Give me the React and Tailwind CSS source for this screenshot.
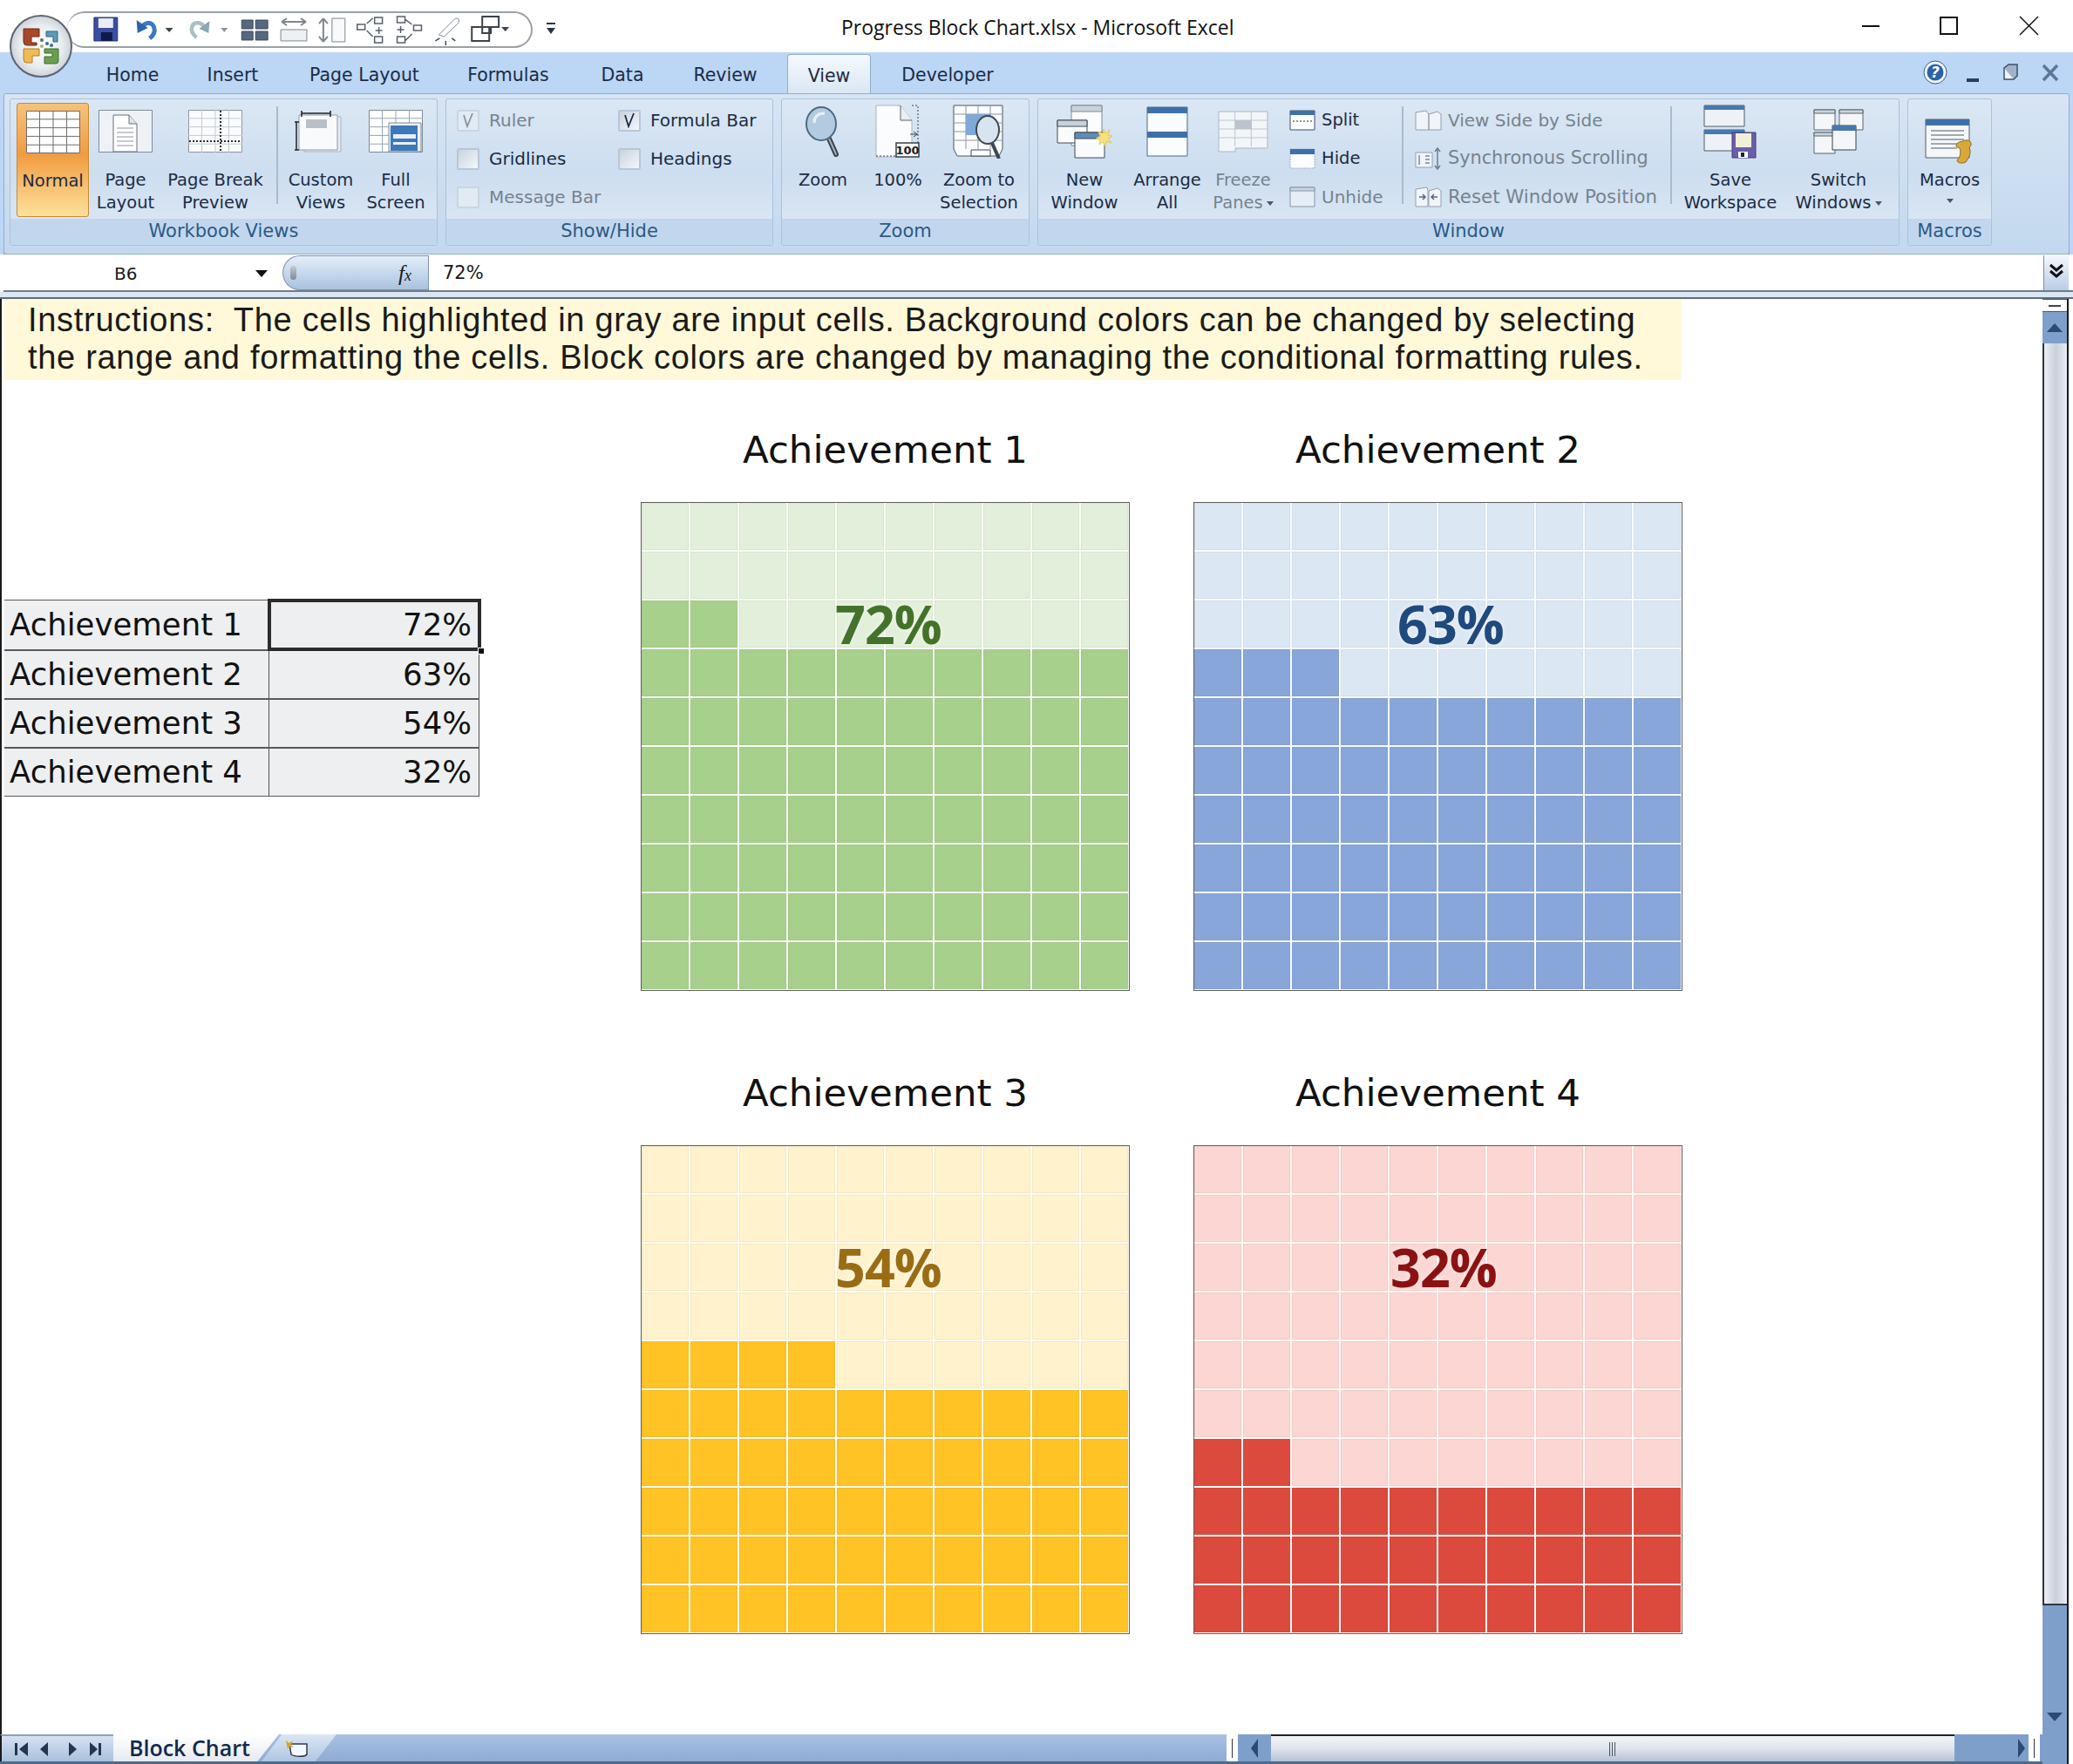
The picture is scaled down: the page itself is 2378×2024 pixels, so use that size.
import { Fragment } from 'react'

const charts = [
  [
    { title: 'Achievement 1', pct: 72, on: 'bg-[#a8d08d]', off: 'bg-[#e2efda]', line: 'bg-[#fafcf6]', text: 'text-[#44722a]', pos: 'left-[222px] top-[104px]' },
    { title: 'Achievement 2', pct: 63, on: 'bg-[#88a6da]', off: 'bg-[#dce7f4]', line: 'bg-[#f9fbfe]', text: 'text-[#1f4a7d]', pos: 'left-[233px] top-[104px]' },
  ],
  [
    { title: 'Achievement 3', pct: 54, on: 'bg-[#ffc326]', off: 'bg-[#fff2cc]', line: 'bg-[#fefcf3]', text: 'text-[#9a6c14]', pos: 'left-[222px] top-[104px]' },
    { title: 'Achievement 4', pct: 32, on: 'bg-[#dc4a3e]', off: 'bg-[#fcd6d2]', line: 'bg-[#fef8f7]', text: 'text-[#8c1212]', pos: 'left-[225px] top-[104px]' },
  ],
]

const rows = [
  ['Achievement 1', '72%'],
  ['Achievement 2', '63%'],
  ['Achievement 3', '54%'],
  ['Achievement 4', '32%'],
]

const tabs = [
  ['Home', 'w-[118px]'],
  ['Insert', 'w-[112px]'],
  ['Page Layout', 'w-[190px]'],
  ['Formulas', 'w-[140px]'],
  ['Data', 'w-[122px]'],
  ['Review', 'w-[114px]'],
]

function BlockChart({ chart }) {
  const full = Math.floor(chart.pct / 10)
  const rest = chart.pct % 10
  const cells = []
  for (let r = 0; r < 10; r++) {
    for (let c = 0; c < 10; c++) {
      const fromBottom = 9 - r
      const filled = fromBottom < full || (fromBottom === full && c < rest)
      cells.push(<div key={r + '-' + c} className={`h-[54px] w-[54px] shadow-[inset_0_0_0_1px_rgba(60,60,40,.05)] ${filled ? chart.on : chart.off}`} />)
    }
  }
  return (
    <div className="flex w-[561px] flex-col items-center">
      <div className="flex h-[60px] items-center pt-[2px] text-[43.500px] text-[#111]">{chart.title}</div>
      <div className={`relative mt-[30px] grid w-[561px] grid-cols-[repeat(10,54px)] gap-[2px] border-[1px] border-[#5f5f5a] pb-[1px] ${chart.line}`}>
        {cells}
        <span className={`absolute [font-family:'Open_Sans',sans-serif] text-[61px] font-bold leading-[70px] tracking-[-1px] [text-shadow:0_0_6px_rgba(255,255,255,.6)] ${chart.pos} ${chart.text}`}>
          {chart.pct}%
        </span>
      </div>
    </div>
  )
}

function OfficeButton() {
  return (
    <div className="absolute left-[11px] top-[17px] z-10 flex h-[72px] w-[72px] items-center justify-center rounded-full border-[2px] border-[#5b6570] bg-radial from-[#ffffff] via-[#e9edf0] to-[#a9b3bb]">
      <svg width="48" height="48" viewBox="0 0 48 48">
        <path d="M4 4h18v9H13v7h6v3H8a4 4 0 0 1-4-4z" fill="#a8482a" stroke="#6e2a10" />
        <path d="M30 7h13v12h-5v-6h-8z" fill="#5e9bb8" stroke="#2d6685" />
        <path d="M4 27h18v8h-8v8H8a4 4 0 0 1-4-4z" fill="#eebb58" stroke="#b57c18" />
        <path d="M28 27h16v14a3 3 0 0 1-3 3H28v-8h9v-4h-9z" fill="#6a9f52" stroke="#3b7126" />
        <circle cx="25" cy="17" r="2" fill="#5b6a72" />
        <circle cx="31" cy="21" r="2" fill="#3f6f8a" />
        <circle cx="25" cy="24" r="2" fill="#a9b089" />
        <circle cx="36" cy="23" r="2" fill="#3f6f8a" />
      </svg>
    </div>
  )
}

function Qat() {
  const s = '#7d8791'
  return (
    <div className="relative ml-[77px] mt-[13px] flex h-[42px] w-[534px] items-center rounded-r-[21px] rounded-l-[20px] border-[2px] border-[#9aa0a6] border-l-0 bg-white">
      <svg width="534" height="42" viewBox="77 13 534 42">
        <path d="M108 20h27v27h-27z" fill="#3a4f9e" stroke="#1f2f70" />
        <path d="M113 21h17v11h-17z" fill="#e8ecf5" />
        <path d="M116 37h13v10h-13z" fill="#101a4a" />
        <path d="M162 34c3-9 13-10 15-3 2 6-1 10-5 13" fill="none" stroke="#3c78c4" strokeWidth="5" />
        <path d="M157 23l1 15 12-6z" fill="#2f65ad" />
        <path d="M190 32h9l-4.500 5z" fill="#38424e" />
        <path d="M236 33c-3-8-13-9-15-3-2 6 1 10 5 13" fill="none" stroke="#a9bfc7" strokeWidth="4.500" />
        <path d="M241 24l-1 14-11-5z" fill="#8ea7b1" />
        <path d="M254 32h8l-4 5z" fill="#8a939c" />
        <path d="M278 23h13v10h-13zM294 23h14v10h-14zM278 36h13v10h-13zM294 36h14v10h-14z" fill="#55687d" stroke="#3a4a5c" />
        <path d="M323 34h30v13h-30z" fill="#eef1f4" stroke={s} />
        <path d="M324 25h28M324 25l6-4M324 25l6 4M352 25l-6-4M352 25l-6 4" fill="none" stroke={s} strokeWidth="2" />
        <path d="M382 21h15v27h-15z" fill="#f7f9fb" stroke={s} />
        <path d="M372 21v27M372 21l-5 6M372 21l5 6M372 48l-5-6M372 48l5-6" fill="none" stroke={s} strokeWidth="2" />
        <path d="M411 28h9v6h-9zM431 20h9v7h-9zM431 42h9v7h-9zM422 27l7-6M422 35l7 7M432 35h8M436 31v8" fill="none" stroke="#56606b" strokeWidth="1.500" />
        <path d="M476 29h9v6h-9zM457 19h9v7h-9zM457 42h9v7h-9zM466 22l8 6M466 47l8-8M457 34h8M461 30v8" fill="none" stroke="#56606b" strokeWidth="1.500" />
        <path d="M505 40l18-18c4-3 7 1 4 5l-16 15z" fill="#fff" stroke="#7f8992" />
        <path d="M501 47l5-3M513 47v5M524 47l-4-3" fill="none" stroke="#3c4650" strokeWidth="1.500" />
        <path d="M555 19h19v12h-9v7h-10zM543 31h20v16h-20z" fill="none" stroke="#3a434c" strokeWidth="2" />
        <path d="M577 31h9l-4.500 5z" fill="#38424e" />
      </svg>
    </div>
  )
}

function WinControls() {
  return (
    <svg width="232" height="26" viewBox="0 0 232 26" className="mb-[2px] ml-auto mr-[10px]">
      <path d="M0 14h20" stroke="#111" strokeWidth="2" />
      <path d="M90 4h19v19H90z" fill="none" stroke="#111" strokeWidth="2" />
      <path d="M181 3l21 21M202 3l-21 21" stroke="#111" strokeWidth="1.500" />
    </svg>
  )
}

function HelpIcons() {
  return (
    <svg width="160" height="34" viewBox="0 0 160 34" className="ml-auto mr-[12px]">
      <circle cx="14" cy="16" r="13" fill="#f4f8fd" stroke="#3a5f8d" />
      <circle cx="14" cy="16" r="9.500" fill="#2b62a8" />
      <text x="14" y="22" textAnchor="middle" fontSize="17" fontWeight="700" fontStyle="italic" fill="#fff">?</text>
      <path d="M50 23h14v4H50z" fill="#2c3e55" />
      <path d="M93 11h11v13H93z" fill="#eef3f9" stroke="#3f5169" strokeWidth="1.500" />
      <path d="M93 11l5-4h10v13l-4 4" fill="#9fb2c8" stroke="#3f5169" strokeWidth="1.500" />
      <path d="M138 8l16 17M154 8l-16 17" stroke="#5b7699" strokeWidth="3.500" />
    </svg>
  )
}

function Ico({ w = 62, h = 50, children }) {
  return <svg width={w} height={h} viewBox={`0 0 ${w} ${h}`}>{children}</svg>
}

function GridLines({ x, y, w, h, cols, rows, stroke = '#7e8790' }) {
  const d = []
  for (let i = 1; i < cols; i++) d.push(`M${x + (w * i) / cols} ${y}v${h}`)
  for (let i = 1; i < rows; i++) d.push(`M${x} ${y + (h * i) / rows}h${w}`)
  return <path d={d.join('')} fill="none" stroke={stroke} strokeWidth="1" />
}

const icons = {
  normal: (
    <Ico>
      <path d="M.5.5h61v48H.5z" fill="#fff" stroke="#6d6d6d" />
      <GridLines x={0} y={0} w={62} h={49} cols={4} rows={5} stroke="#6d6d6d" />
    </Ico>
  ),
  pageLayout: (
    <Ico>
      <path d="M.5.5h61v48H.5z" fill="#eef2f7" stroke="#7e8c9b" />
      <path d="M17 6h18l9 10v32H17z" fill="#fff" stroke="#68717b" />
      <path d="M35 6v10h9" fill="#dfe5ec" stroke="#68717b" />
      <path d="M21 21h19M21 26h19M21 31h19M21 36h19M21 41h19" stroke="#8d969f" />
    </Ico>
  ),
  pageBreak: (
    <Ico>
      <path d="M.5.5h61v48H.5z" fill="#fafbfc" stroke="#8d97a2" />
      <GridLines x={0} y={0} w={62} h={49} cols={4} rows={5} stroke="#c3cbd3" />
      <path d="M37 1v47M1 36h60" fill="none" stroke="#26303a" strokeWidth="2" strokeDasharray="2 2" />
    </Ico>
  ),
  custom: (
    <Ico w={62} h={50}>
      <path d="M12 8h42v40H12z" fill="#e4eaf1" stroke="#a9b5c2" />
      <path d="M6 6h44v40H6z" fill="#f8fafc" stroke="#8d99a5" />
      <path d="M14 11h24v10H14z" fill="#b9bfc6" />
      <path d="M9 1v7M42 1v7M9 4h33M1 14h5M1 46h5M3 14v32" fill="none" stroke="#222" strokeWidth="1.500" />
    </Ico>
  ),
  fullScreen: (
    <Ico>
      <path d="M.5.5h61v48H.5z" fill="#fff" stroke="#7d8894" />
      <GridLines x={0} y={0} w={62} h={49} cols={4} rows={5} stroke="#9aa5b0" />
      <path d="M23 15h37v33H23z" fill="#eaf0f6" stroke="#7d8894" />
      <path d="M25 18h31v29H25z" fill="#3d78b8" />
      <path d="M28 28h26v5H28zM28 37h26v3H28z" fill="#e6eef7" />
    </Ico>
  ),
  zoom: (
    <Ico w={44} h={60}>
      <path d="M29 38l8 18" stroke="#39424c" strokeWidth="6" strokeLinecap="round" />
      <path d="M29 38l8 18" stroke="#a5adb5" strokeWidth="2" strokeLinecap="round" />
      <ellipse cx="20" cy="21" rx="17" ry="19" fill="#b3cbe0" stroke="#4f6a82" strokeWidth="2" />
      <path d="M12 20c0-8 5-11 12-11" fill="none" stroke="#e9f1f7" strokeWidth="3" />
    </Ico>
  ),
  hundred: (
    <Ico w={52} h={62}>
      <path d="M1 1h28l13 17v42H1z" fill="#fbfcfd" stroke="#aab3bb" />
      <path d="M29 1v17h13" fill="#eceff2" stroke="#58626b" />
      <path d="M42 1h7v58M1 59h48" fill="none" stroke="#3a434b" strokeWidth="1" strokeDasharray="2 2" />
      <path d="M40 34h9M44 31l4 3-4 3" fill="none" stroke="#3a434b" />
      <path d="M24 44h26v16H24z" fill="#f7f8f9" stroke="#3a434b" strokeWidth="1.500" />
      <text x="37" y="57" textAnchor="middle" fontSize="13" fontWeight="700" fill="#222">100</text>
    </Ico>
  ),
  zoomSel: (
    <Ico w={60} h={62}>
      <path d="M1 1h56v50l-4 8H5l-4-8z" fill="#fbfcfd" stroke="#4c555e" />
      <GridLines x={1} y={1} w={56} h={50} cols={4} rows={5} stroke="#8d97a0" />
      <path d="M15 11h28v24H15z" fill="#7ea9d8" />
      <path d="M21 52h22v7H21z" fill="#fff" stroke="#3f4851" />
      <path d="M45 44l8 18" stroke="#3f4851" strokeWidth="4" />
      <ellipse cx="40" cy="29" rx="13" ry="16" fill="#d8e5f1" stroke="#3f4851" strokeWidth="2" />
    </Ico>
  ),
  newWindow: (
    <Ico w={64} h={62}>
      <path d="M17 1h35v46H17z" fill="#fbfcfd" stroke="#7f8b96" />
      <path d="M17 1h35v7H17z" fill="#c9d2db" stroke="#7f8b96" />
      <path d="M1 18h34v26H1z" fill="#fbfcfd" stroke="#3e4a55" />
      <path d="M1 18h34v7H1z" fill="#c9d2db" stroke="#3e4a55" />
      <path d="M21 32h34v29H21z" fill="#fbfcfd" stroke="#3e4a55" />
      <path d="M21 32h34v7H21z" fill="#5e8dbd" stroke="#3e4a55" />
      <path d="M54 28l2 5 5-4-2 6 5 1-5 3 4 5-6-2-1 6-3-5-4 3 1-6-5-1 5-3-2-5 5 2z" fill="#f6e27a" stroke="#e2c65a" />
    </Ico>
  ),
  arrange: (
    <Ico w={48} h={58}>
      <path d="M1 1h46v56H1z" fill="#fbfcfd" stroke="#4c6a8c" />
      <path d="M1 1h46v7H1z" fill="#3f6fa8" />
      <path d="M1 29h46v7H1z" fill="#3f6fa8" />
    </Ico>
  ),
  freeze: (
    <Ico w={58} h={48}>
      <path d="M1 1h56v42H20v4H1z" fill="#f3f6f9" stroke="#aab6c1" />
      <GridLines x={1} y={1} w={56} h={40} cols={3} rows={4} stroke="#bcc6d0" />
      <path d="M20 11h19v10H20z" fill="#b9c4cf" />
    </Ico>
  ),
  save: (
    <Ico w={62} h={62}>
      <path d="M1 1h46v24H1z" fill="#eef2f7" stroke="#4f5c69" />
      <path d="M1 1h46v5H1z" fill="#4878ae" />
      <path d="M1 29h46v24H1z" fill="#eef2f7" stroke="#4f5c69" />
      <path d="M1 29h46v5H1z" fill="#4878ae" />
      <path d="M33 32h27v29H33z" fill="#6a5eaa" stroke="#3f3a78" />
      <path d="M37 33h18v16H37z" fill="#f2efd8" />
      <path d="M40 54h11v7H40z" fill="#fff" />
      <path d="M43 55h4v5h-4z" fill="#222" />
    </Ico>
  ),
  switch: (
    <Ico w={58} h={52}>
      <path d="M1 1h24v23H1zM30 1h27v23H30zM1 27h24v24H1z" fill="#f4f6f8" stroke="#5b6671" />
      <path d="M1 1h24v4H1zM30 1h27v4H30zM1 27h24v4H1z" fill="#ccd5de" stroke="#5b6671" />
      <path d="M22 19h27v28H22z" fill="#f4f6f8" stroke="#39434e" />
      <path d="M22 19h27v6H22z" fill="#4878ae" />
    </Ico>
  ),
  macros: (
    <Ico w={58} h={52}>
      <path d="M1 1h50v44H1z" fill="#f5f7f9" stroke="#4f5c69" />
      <path d="M1 1h50v7H1z" fill="#3f6fa8" />
      <path d="M7 14h38M7 19h38M7 24h38M7 29h30M7 34h30" stroke="#a1a9b1" strokeWidth="2" />
      <path d="M36 32c0-6 6-5 10-7 5-1 8 2 7 6l-2 2c3 8-1 12-4 17-4 2-10 1-10-2 3-3 5-8 3-14z" fill="#d9a83c" stroke="#8c6a22" />
    </Ico>
  ),
}

function LargeButton({ w, icon, lines, disabled, arrow, active }) {
  return (
    <div className={`flex h-[131px] flex-col items-center ${w} ${active ? 'rounded-[3px] border-[1px] border-[#c98a36] bg-linear-to-b from-[#f6c27a] via-[#f09c3e] via-45% to-[#fde19a]' : ''}`}>
      <div className="flex h-[76px] items-center justify-center pb-[10px]">{icon}</div>
      <div className={`text-center text-[19.500px] leading-[25.500px] ${disabled ? 'text-[#76838f]' : 'text-[#1b2c45]'}`}>
        {lines.map((l, i) => (
          <div key={l} className="whitespace-nowrap">
            {l}
            {arrow && i === lines.length - 1 && <span className="ml-[4px] inline-block h-0 w-0 border-x-[4px] border-t-[5px] border-x-transparent border-t-[#4a5766] align-middle" />}
          </div>
        ))}
      </div>
    </div>
  )
}

function Check({ checked, off, label }) {
  return (
    <div className="flex h-[44px] items-center">
      <div className={`flex h-[25px] w-[26px] items-center justify-center rounded-[2px] border-[2px] ${off ? 'border-[#c9d5e2] bg-[#e2ebf4]' : 'border-[#b7c7d8] bg-linear-to-br from-[#c9d3de] to-[#f4f7fa]'}`}>
        {checked && (
          <svg width="14" height="18" viewBox="0 0 14 18">
            <path d="M2 3l4 13 6-15" fill="none" stroke={off ? '#8594a4' : '#1b2c45'} strokeWidth="1.800" />
          </svg>
        )}
      </div>
      <span className={`ml-[11px] whitespace-nowrap text-[20px] ${off ? 'text-[#76838f]' : 'text-[#1b2c45]'}`}>{label}</span>
    </div>
  )
}

function SmallAction({ icon, label, disabled, size = 'text-[19.500px]' }) {
  return (
    <div className="flex h-[44px] items-center">
      {icon}
      <span className={`ml-[7px] whitespace-nowrap ${size} ${disabled ? 'text-[#76838f]' : 'text-[#1b2c45]'}`}>{label}</span>
    </div>
  )
}

function Group({ w, label, children }) {
  return (
    <div className={`flex h-[169px] flex-col overflow-hidden rounded-[3px] border-[1px] border-[#aac2da] bg-linear-to-b from-[#dbe7f4] via-[#cddef0] to-[#dfe9f5] ${w}`}>
      <div className="flex h-[137px] pt-[4px]">{children}</div>
      <div className="flex h-[30px] items-center justify-center bg-[#c2d7ee] text-[21px] text-[#2c5a85]">{label}</div>
    </div>
  )
}

function Divider() {
  return <div className="mt-[4px] h-[112px] w-[2px] bg-[#a9bbcd]" />
}

function Ribbon() {
  return (
    <div className="mx-[4px] flex h-[185px] gap-[9px] rounded-[3px] border-[1px] border-[#93adc9] bg-linear-to-b from-[#d7e5f4] to-[#c3d8ee] pl-[6px] pt-[5px] shadow-[0_2px_0_#71828f]">
      <Group w="w-[491px]" label="Workbook Views">
        <div className="w-[7px]" />
        <LargeButton w="w-[83px]" icon={icons.normal} lines={['Normal']} active />
        <LargeButton w="w-[84px]" icon={icons.pageLayout} lines={['Page', 'Layout']} />
        <LargeButton w="w-[122px]" icon={icons.pageBreak} lines={['Page Break', 'Preview']} />
        <div className="w-[9px]" />
        <Divider />
        <LargeButton w="w-[98px]" icon={icons.custom} lines={['Custom', 'Views']} />
        <LargeButton w="w-[74px]" icon={icons.fullScreen} lines={['Full', 'Screen']} />
      </Group>
      <Group w="w-[376px]" label="Show/Hide">
        <div className="ml-[12px] mt-[-2px] w-[185px]">
          <Check checked off label="Ruler" />
          <Check label="Gridlines" />
          <Check off label="Message Bar" />
        </div>
        <div className="mt-[-2px]">
          <Check checked label="Formula Bar" />
          <Check label="Headings" />
        </div>
      </Group>
      <Group w="w-[285px]" label="Zoom">
        <div className="w-[6px]" />
        <LargeButton w="w-[82px]" icon={icons.zoom} lines={['Zoom']} />
        <LargeButton w="w-[90px]" icon={icons.hundred} lines={['100%']} />
        <LargeButton w="w-[96px]" icon={icons.zoomSel} lines={['Zoom to', 'Selection']} />
      </Group>
      <Group w="w-[989px]" label="Window">
        <div className="w-[5px]" />
        <LargeButton w="w-[96px]" icon={icons.newWindow} lines={['New', 'Window']} />
        <LargeButton w="w-[94px]" icon={icons.arrange} lines={['Arrange', 'All']} />
        <LargeButton w="w-[80px]" icon={icons.freeze} lines={['Freeze', 'Panes']} disabled arrow />
        <div className="ml-[13px] mt-[-2px] w-[129px]">
          <SmallAction
            label="Split"
            icon={<svg width="30" height="24" viewBox="0 0 30 24"><path d="M1 1h28v22H1z" fill="#fbfcfd" stroke="#3c5068" /><path d="M1 1h28v5H1z" fill="#3f6fa8" /><path d="M4 13h22" stroke="#333" strokeDasharray="2 2" /></svg>}
          />
          <SmallAction
            label="Hide"
            icon={<svg width="30" height="24" viewBox="0 0 30 24"><path d="M1 1h28v22H1z" fill="#fbfcfd" stroke="#9db0c4" strokeDasharray="2 1" /><path d="M1 1h28v6H1z" fill="#3f6fa8" /></svg>}
          />
          <SmallAction
            label="Unhide"
            disabled
            size="text-[20px]"
            icon={<svg width="30" height="24" viewBox="0 0 30 24"><path d="M1 1h28v22H1z" fill="#e6edf5" stroke="#8695a5" /><path d="M1 1h28v4H1z" fill="#cbd5df" stroke="#8695a5" /></svg>}
          />
        </div>
        <Divider />
        <div className="ml-[13px] mt-[-2px] w-[293px]">
          <SmallAction
            disabled
            size="text-[20px]"
            label="View Side by Side"
            icon={<svg width="31" height="24" viewBox="0 0 31 24"><path d="M1 3l12-2 3 4v18H1zM16 5l10-3 4 3v18H16z" fill="#f1f5f9" stroke="#8f9eae" /></svg>}
          />
          <SmallAction
            disabled
            size="text-[20.800px]"
            label="Synchronous Scrolling"
            icon={<svg width="31" height="28" viewBox="0 0 31 28"><path d="M1 7h19v17H1z" fill="#f1f5f9" stroke="#8f9eae" /><path d="M5 10v11M12 11h5M12 15h5M12 19h5" stroke="#7a8997" strokeWidth="1.500" /><path d="M26 2v24M23 6l3-4 3 4M23 22l3 4 3-4" fill="none" stroke="#6f7e8d" strokeWidth="1.500" /></svg>}
          />
          <SmallAction
            disabled
            size="text-[21.300px]"
            label="Reset Window Position"
            icon={<svg width="31" height="24" viewBox="0 0 31 24"><path d="M1 3l13-2 1 4v18H1zM16 5l10-3 4 3v18H16z" fill="#f1f5f9" stroke="#8f9eae" /><path d="M5 12h6M9 9l3 3-3 3M26 12h-6M22 9l-3 3 3 3" fill="none" stroke="#59677a" strokeWidth="1.500" /></svg>}
          />
        </div>
        <Divider />
        <LargeButton w="w-[134px]" icon={icons.save} lines={['Save', 'Workspace']} />
        <LargeButton w="w-[114px]" icon={icons.switch} lines={['Switch', 'Windows']} arrow />
      </Group>
      <Group w="w-[97px]" label="Macros">
        <div className="flex h-[131px] w-full flex-col items-center">
          <div className="flex h-[76px] items-end justify-center pb-[6px]">{icons.macros}</div>
          <div className="text-[19.500px] leading-[25.500px] text-[#1b2c45]">Macros</div>
          <div className="mt-[8px] h-0 w-0 border-x-[4px] border-t-[5px] border-x-transparent border-t-[#4a5766]" />
        </div>
      </Group>
    </div>
  )
}

function FormulaBar() {
  return (
    <div className="ml-[4px] flex h-[43px] items-stretch border-b-[2px] border-[#6f7c86] bg-white pt-[1px] text-[#1a1a1a]">
      <div className="flex w-[320px] items-center pt-[2px]">
        <span className="ml-[127px] text-[20px]">B6</span>
        <span className="ml-[136px] h-0 w-0 border-x-[7px] border-t-[8px] border-x-transparent border-t-[#111]" />
      </div>
      <div className="flex w-[167px] items-center rounded-l-[20px] border-[1px] border-r-0 border-[#8093a8] bg-linear-to-b from-[#e4eef9] to-[#a9c2e0] pl-[8px]">
        <span className="h-[16px] w-[7px] rounded-full bg-linear-to-b from-[#c4ccd4] to-[#7f8a95]" />
        <span className="ml-[117px] [font-family:'Liberation_Serif',serif] text-[25px] italic leading-none">
          f<span className="text-[18px]">x</span>
        </span>
      </div>
      <div className="flex items-center border-l-[1px] border-[#8093a8] pl-[16px] pt-[2px] text-[21px]">72%</div>
      <div className="ml-auto mr-[5px] flex w-[29px] flex-col items-center justify-center border-l-[1px] border-[#7f8c9a] bg-linear-to-b from-[#f5f8fc] to-[#b8cde6]">
        <svg width="20" height="22" viewBox="0 0 20 22">
          <path d="M3 2l7 6 7-6M3 9l7 6 7-6" fill="none" stroke="#111" strokeWidth="3" />
        </svg>
      </div>
    </div>
  )
}

function InputTable() {
  return (
    <div className="relative ml-[3px] mt-[252px] w-[545px] border-y-[1px] border-[#5a5a5a] text-[35.500px] text-[#111]">
      {rows.map(([name, value], i) => (
        <div key={name} className={`flex h-[56px] items-center bg-[#eeeff0] ${i > 0 ? 'border-t-[2px] border-[#5a5a5a]' : ''}`}>
          <div className="w-[303px] pl-[6px] leading-none">{name}</div>
          <div className="flex h-full flex-1 items-center justify-end border-x-[1px] border-[#4f4f4f] pr-[8px]">{value}</div>
        </div>
      ))}
      <div className="absolute left-[302px] top-[-2px] h-[60px] w-[245px] border-[4px] border-[#2b2b2b]" />
      <div className="absolute left-[543px] top-[54px] h-[8px] w-[8px] border-[1px] border-white bg-[#111]" />
    </div>
  )
}

function Sheet() {
  return (
    <div className="flex h-[1647px] flex-col border-l-[2px] border-[#1a1a1a] bg-white">
      <div className="ml-[3px] h-[93px] w-[1924px] whitespace-pre bg-[#fff9d9] pl-[27px] pt-[3px] [font-family:'Liberation_Sans',sans-serif] text-[38px] leading-[43px] tracking-[0.7px] text-[#1a1a1a]">
        <div>Instructions:  The cells highlighted in gray are input cells. Background colors can be changed by selecting</div>
        <div>the range and formatting the cells. Block colors are changed by managing the conditional formatting rules.</div>
      </div>
      <div className="flex">
        <div className="w-[733px]">
          <InputTable />
        </div>
        <div className="flex flex-col">
          {charts.map((row, i) => (
            <div key={i} className={`flex gap-[73px] ${i === 0 ? 'mt-[50px]' : 'mt-[87px]'}`}>
              {row.map((c) => (
                <BlockChart key={c.title} chart={c} />
              ))}
            </div>
          ))}
        </div>
      </div>
    </div>
  )
}

function SheetTabs() {
  return (
    <div className="flex h-[34px] border-b-[3px] border-[#4f6a8a] bg-linear-to-b from-[#a9c1e2] to-[#8fabd4]">
      <div className="flex h-full w-[130px] items-center border-l-[2px] border-t-[2px] border-[#1a1a1a] border-t-[#8fa0b5] bg-linear-to-b from-[#d6e2f1] to-[#a9c0de] pl-[1px]">
        <svg width="120" height="20" viewBox="0 0 120 20">
          <path d="M14 3v14h3V3zM29 2l-10 8 10 8zM52 2l-9 8 9 8zM76 2l9 8-9 8zM100 2l9 8-9 8zM110 3v14h3V3z" fill="#26354b" />
        </svg>
      </div>
      <div className="flex h-full w-[190px] items-center bg-linear-to-b from-white to-[#e6eaf0] pl-[18px] [font-family:'Open_Sans',sans-serif] text-[25px] font-semibold text-[#13294d] [clip-path:polygon(0_0,100%_0,87%_100%,0_100%)]">
        Block Chart
      </div>
      <div className="ml-[-20px] flex h-full w-[86px] items-center bg-linear-to-b from-[#dbe6f4] to-[#afc6e2] pl-[26px] [clip-path:polygon(27%_0,100%_0,72%_100%,0_100%)]">
        <svg width="28" height="22" viewBox="0 0 28 22">
          <path d="M6 6h20v12c-2 3-14 3-18 0z" fill="#f4f7fb" stroke="#2f3b4a" strokeWidth="1.500" />
          <path d="M2 2l4 3 4-3-2 5 3 3-5-1-2 3z" fill="#d9a524" />
        </svg>
      </div>
      <div className="ml-auto flex h-full items-stretch">
        <div className="flex w-[13px] items-center justify-center bg-white"><span className="h-[22px] w-[1px] bg-[#333]" /></div>
        <div className="flex w-[38px] items-center justify-center bg-[#7f9fcb]">
          <svg width="12" height="24" viewBox="0 0 12 24"><path d="M10 1L2 12l8 11z" fill="#2c4a72" /></svg>
        </div>
        <div className="flex w-[784px] items-center justify-center border-t-[2px] border-[#222] bg-linear-to-b from-[#f2f4f8] via-[#dfe4ec] to-[#b5c2d4]">
          <span className="h-[16px] w-[8px] bg-[repeating-linear-gradient(90deg,#4a5460_0_1px,transparent_1px_3px)]" />
        </div>
        <div className="flex w-[85px] items-center justify-end bg-[#7f9fcb] pr-[2px]">
          <svg width="12" height="24" viewBox="0 0 12 24"><path d="M2 1l8 11-8 11z" fill="#2c4a72" /></svg>
        </div>
        <div className="flex w-[13px] items-center justify-center bg-white"><span className="h-[22px] w-[1px] bg-[#333]" /></div>
        <div className="w-[3px] bg-[#7f9fcb]" />
      </div>
    </div>
  )
}

function VScroll() {
  return (
    <div className="flex h-[1681px] w-[30px] flex-col border-r-[2px] border-[#1a1a1a] bg-[#7f9fcb]">
      <div className="flex h-[15px] items-center justify-center border-y-[1px] border-[#4a5a6a] bg-white">
        <span className="h-[2px] w-[14px] bg-[#444]" />
      </div>
      <div className="flex h-[36px] items-center justify-center">
        <svg width="20" height="12" viewBox="0 0 20 12"><path d="M10 1l9 10H1z" fill="#2c4a72" /></svg>
      </div>
      <div className="h-[1448px] border-x-[2px] border-b-[2px] border-[#2f3540] border-r-0 bg-linear-to-r from-[#eef1f6] via-[#c7d0dc] to-[#e8ecf2]" />
      <div className="flex flex-1 items-start justify-center pt-[122px]">
        <svg width="20" height="12" viewBox="0 0 20 12"><path d="M10 11L1 1h18z" fill="#2c4a72" /></svg>
      </div>
    </div>
  )
}

export default function App() {
  return (
    <div className="relative h-[2024px] w-[2378px] overflow-hidden bg-white [font-family:'DejaVu_Sans',sans-serif]">
      <OfficeButton />
      <div className="flex h-[60px] items-start">
        <Qat />
        <svg width="12" height="16" viewBox="0 0 12 16" className="ml-[15px] mt-[25px]">
          <path d="M1 1h10v2H1zM1 7h10l-5 7z" fill="#2c3642" />
        </svg>
        <div className="ml-[327px] mt-[12px] whitespace-pre [font-family:'Open_Sans',sans-serif] text-[23px] leading-[38px] text-[#111]">Progress Block Chart.xlsx - Microsoft Excel</div>
        <div className="ml-auto mt-[16px]"><WinControls /></div>
      </div>
      <div className="flex h-[47px] items-end bg-[#bcd6f6] pl-[93px] text-[20.500px] text-[#1b2c45]">
        {tabs.map(([t, w]) => (
          <Fragment key={t}>
            <div className={`flex h-[45px] items-center justify-center pt-[4px] ${w}`}>{t}</div>
          </Fragment>
        ))}
        <div className="ml-[14px] flex h-[45px] w-[96px] items-center justify-center rounded-t-[4px] border-[1px] border-b-0 border-[#93adc9] bg-linear-to-b from-[#f5f9fd] to-[#dbe7f4] pt-[4px]">View</div>
        <div className="flex h-[45px] w-[176px] items-center justify-center pt-[4px]">Developer</div>
        <div className="mb-[6px] ml-auto"><HelpIcons /></div>
      </div>
      <div className="bg-[#bcd6f6]">
        <Ribbon />
      </div>
      <FormulaBar />
      <div className="h-[8px] border-b-[2px] border-[#5f6c76] bg-[#dbe7f4]" />
      <div className="flex">
        <div className="w-[2343px]">
          <Sheet />
          <SheetTabs />
        </div>
        <VScroll />
      </div>
    </div>
  )
}
